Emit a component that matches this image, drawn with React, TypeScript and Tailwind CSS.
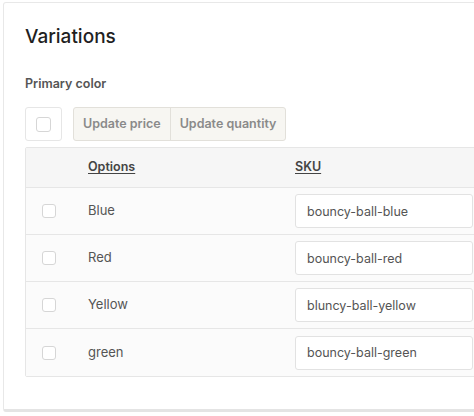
import { useState } from 'react';

const rows = [
  { name: 'Blue', sku: 'bouncy-ball-blue' },
  { name: 'Red', sku: 'bouncy-ball-red' },
  { name: 'Yellow', sku: 'bluncy-ball-yellow' },
  { name: 'green', sku: 'bouncy-ball-green' },
];

function Box({ size = 'w-[15px] h-[15px]' }: { size?: string }) {
  return <span className={`${size} block rounded-[3px] border border-[#d6d6d6] bg-white`} />;
}

export default function App() {
  const [skus, setSkus] = useState(rows.map((r) => r.sku));

  return (
    <div className="w-[474px] h-[416px] overflow-hidden bg-white pt-[2px] pl-[3px]" style={{ fontFamily: 'Inter, "Open Sans", sans-serif' }}>
      <div className="w-[520px] h-[410px] border border-[#e8e8e8] border-b-[3px] border-b-[#e4e4e4] rounded-[3px] bg-white pl-[21px] pt-[20px]">
        <h2 className="text-[19px] leading-[28px] text-[#1f1f1f] font-medium">Variations</h2>
        <div className="mt-[24px] text-[12.5px] leading-[18px] font-semibold text-[#555]">Primary color</div>

        <div className="mt-[14px] flex items-center gap-[11px]">
          <button className="w-[37px] h-[34px] flex items-center justify-center rounded-[3px] border border-[#e6e6e6] bg-white">
            <Box />
          </button>
          <div className="flex h-[34px] rounded-[3px] border border-[#e2e0da] bg-[#f7f6f2] text-[12.5px] font-semibold text-[#8a8a8a]">
            <button className="px-[9px] border-r border-[#e2e0da]">Update price</button>
            <button className="px-[9px]">Update quantity</button>
          </div>
        </div>

        <div className="mt-[6px] border border-[#e6e6e6] rounded-[2px] text-[13px]">
          <div className="grid grid-cols-[62px_207px_1fr] h-[40px] items-center bg-[#f6f6f6] border-b border-[#e6e6e6] font-semibold text-[#444] text-[12.5px]">
            <span />
            <span className="underline underline-offset-2">Options</span>
            <span className="underline underline-offset-2">SKU</span>
          </div>
          {rows.map((r, i) => (
            <div
              key={r.name}
              className={`grid grid-cols-[62px_207px_1fr] h-[47px] items-center bg-[#fbfbfb] ${i < rows.length - 1 ? 'border-b border-[#e6e6e6]' : ''}`}
            >
              <span className="pl-[16px]">
                <Box size="w-[14px] h-[14px]" />
              </span>
              <span className="text-[#555]">{r.name}</span>
              <input
                value={skus[i]}
                onChange={(e) => setSkus(skus.map((s, j) => (j === i ? e.target.value : s)))}
                className="w-[178px] h-[34px] px-[11px] rounded-[3px] border border-[#e2e2e2] bg-white text-[#555] text-[12.5px] outline-none"
              />
            </div>
          ))}
        </div>
      </div>
    </div>
  );
}
